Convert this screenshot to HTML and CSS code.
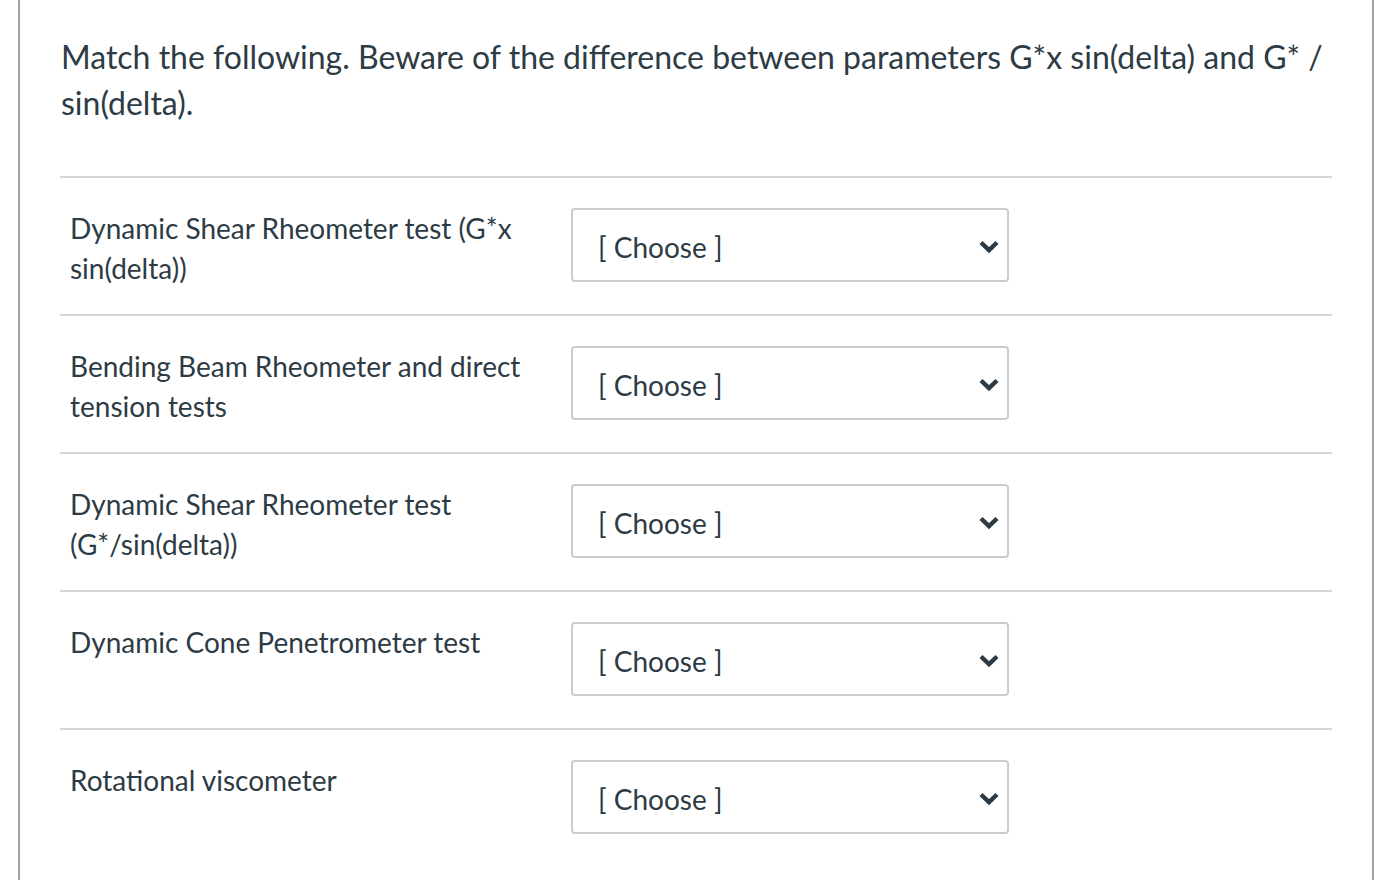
FILE: index.html
```html
<!DOCTYPE html>
<html lang="en">
<head>
    <meta charset="UTF-8">
    <meta name="viewport" content="width=device-width, initial-scale=1.0">
    <title>Quiz question</title>
    <link rel="stylesheet" href="styles.css">
</head>
<body>

    <div class="question">
        <p class="question-text">Match the following. Beware of the difference between parameters G*x sin(delta) and G* / sin(delta).</p>

        <div class="answers">
            <div class="answer">
                <div class="answer-label">Dynamic Shear Rheometer test (G*x sin(delta))</div>
                <div class="select-box">
                    <span>[ Choose ]</span>
                    <svg class="chevron" width="20" height="13" viewBox="0 0 20 13"><path d="M2 2.5 L10 10.2 L18 2.5" fill="none" stroke="#2d3b45" stroke-width="4.4"/></svg>
                </div>
            </div>
            <div class="answer">
                <div class="answer-label">Bending Beam Rheometer and direct tension tests</div>
                <div class="select-box">
                    <span>[ Choose ]</span>
                    <svg class="chevron" width="20" height="13" viewBox="0 0 20 13"><path d="M2 2.5 L10 10.2 L18 2.5" fill="none" stroke="#2d3b45" stroke-width="4.4"/></svg>
                </div>
            </div>
            <div class="answer">
                <div class="answer-label">Dynamic Shear Rheometer test (G*/sin(delta))</div>
                <div class="select-box">
                    <span>[ Choose ]</span>
                    <svg class="chevron" width="20" height="13" viewBox="0 0 20 13"><path d="M2 2.5 L10 10.2 L18 2.5" fill="none" stroke="#2d3b45" stroke-width="4.4"/></svg>
                </div>
            </div>
            <div class="answer">
                <div class="answer-label">Dynamic Cone Penetrometer test</div>
                <div class="select-box">
                    <span>[ Choose ]</span>
                    <svg class="chevron" width="20" height="13" viewBox="0 0 20 13"><path d="M2 2.5 L10 10.2 L18 2.5" fill="none" stroke="#2d3b45" stroke-width="4.4"/></svg>
                </div>
            </div>
            <div class="answer">
                <div class="answer-label">Rotational viscometer</div>
                <div class="select-box">
                    <span>[ Choose ]</span>
                    <svg class="chevron" width="20" height="13" viewBox="0 0 20 13"><path d="M2 2.5 L10 10.2 L18 2.5" fill="none" stroke="#2d3b45" stroke-width="4.4"/></svg>
                </div>
            </div>
        </div>
    </div>

</body>
</html>
```

FILE: styles.css
```css
body {
    font-family: 'Lato', 'Liberation Sans', sans-serif;
    background-color: #fff;
    margin: 0;
    padding: 0;
    color: #2d3b45;
}
.question {
    margin-left: 18px;
    width: 1352px;
    min-height: 880px;
    border-left: 2px solid #a0a0a0;
    border-right: 2px solid #a0a0a0;
}
.question-text {
    margin: 0;
    padding: 34px 40px 0 41px;
    font-size: 32px;
    line-height: 46px;
}
.answers {
    margin: 50px 40px 0 40px;
}
.answer {
    display: flex;
    align-items: flex-start;
    border-top: 2px solid #d6d6d6;
    padding: 30px 0 26px 10px;
}
.answer-label {
    width: 470px;
    margin-right: 31px;
    font-size: 28px;
    line-height: 40px;
}
.select-box {
    flex: none;
    width: 438px;
    height: 74px;
    margin-bottom: 6px;
    box-sizing: border-box;
    border: 2px solid #c7cdd1;
    border-radius: 4px;
    display: flex;
    align-items: center;
    justify-content: space-between;
    padding: 3px 8px 0 25px;
    font-size: 28px;
}
.chevron {
    display: block;
}
```
